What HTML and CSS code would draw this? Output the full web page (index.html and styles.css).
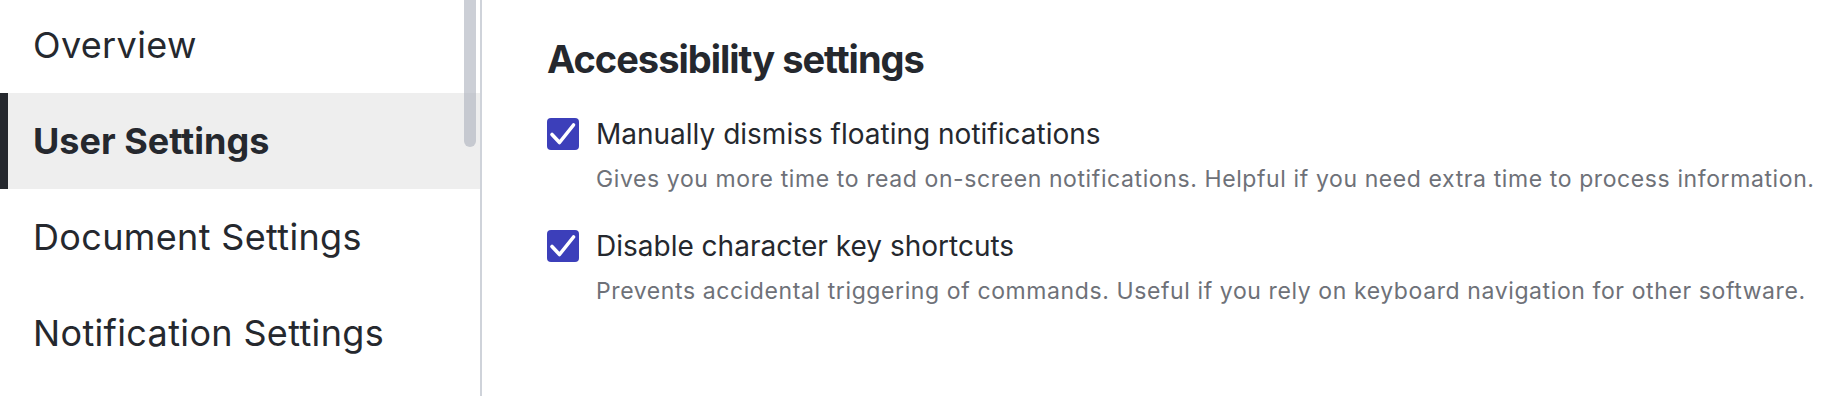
FILE: index.html
```html
<!DOCTYPE html>
<html lang="en">

<head>
    <meta charset="UTF-8">
    <meta name="viewport" content="width=device-width, initial-scale=1.0">
    <title>Settings</title>
    <link rel="stylesheet" href="styles.css">
</head>

<body>
    <div class="layout">
        <!-- left nav, scrolled down a few px -->
        <div class="sidebar">
            <ul class="nav">
                <li class="nav-item">Overview</li>
                <li class="nav-item active">User Settings</li>
                <li class="nav-item">Document Settings</li>
                <li class="nav-item">Notification Settings</li>
            </ul>
            <div class="scroll-thumb"></div>
        </div>

        <div class="content">
            <h2 class="title">Accessibility settings</h2>

            <div class="option">
                <span class="check">
                    <svg viewBox="0 0 32 32" width="32" height="32">
                        <path d="M5 16.5 L12.5 24.5 L26.5 7" fill="none" stroke="#fff" stroke-width="3.6" stroke-linecap="round" stroke-linejoin="round" />
                    </svg>
                </span>
                <div class="option-text">
                    <div class="option-label">Manually dismiss floating notifications</div>
                    <div class="option-desc">Gives you more time to read on-screen notifications. Helpful if you need extra time to process information.</div>
                </div>
            </div>

            <div class="option">
                <span class="check">
                    <svg viewBox="0 0 32 32" width="32" height="32">
                        <path d="M5 16.5 L12.5 24.5 L26.5 7" fill="none" stroke="#fff" stroke-width="3.6" stroke-linecap="round" stroke-linejoin="round" />
                    </svg>
                </span>
                <div class="option-text">
                    <div class="option-label">Disable character key shortcuts</div>
                    <div class="option-desc">Prevents accidental triggering of commands. Useful if you rely on keyboard navigation for other software.</div>
                </div>
            </div>
        </div>
    </div>
</body>

</html>
```

FILE: styles.css
```css
html,
body {
    margin: 0;
    padding: 0;
    background-color: #fff;
    font-family: Inter, "Noto Sans", sans-serif;
    color: #25282e;
}

.layout {
    display: flex;
    height: 396px;
    overflow: hidden;
}

.sidebar {
    width: 480px;
    flex-shrink: 0;
    border-right: 2px solid #cfd3da;
    position: relative;
    overflow: hidden;
}

.nav {
    list-style: none;
    margin: -3px 0 0;
    padding: 0;
}

.nav-item {
    height: 96px;
    line-height: 96px;
    padding-left: 33px;
    font-size: 36px;
    letter-spacing: 0.35px;
}

.nav-item.active {
    background-color: #eeeeee;
    border-left: 8px solid #25282e;
    padding-left: 25px;
    font-weight: 700;
    letter-spacing: 0;
}

.scroll-thumb {
    position: absolute;
    top: -10px;
    right: 4px;
    width: 12px;
    height: 157px;
    border-radius: 0 0 6px 6px;
    background-color: rgba(176, 182, 192, 0.65);
}

.content {
    padding: 35px 0 0 65px;
}

.title {
    margin: 0 0 35px;
    font-size: 38px;
    line-height: 48px;
    font-weight: 700;
    letter-spacing: -1px;
}

.option {
    display: flex;
    gap: 17px;
    margin-bottom: 36px;
}

.check {
    width: 32px;
    height: 32px;
    flex-shrink: 0;
    border-radius: 4px;
    background-color: #3c3fba;
    display: flex;
}

.option-label {
    font-size: 28px;
    line-height: 32px;
}

.option-desc {
    margin-top: 14px;
    font-size: 23px;
    line-height: 30px;
    letter-spacing: 0.6px;
    color: #6e7178;
}
```
